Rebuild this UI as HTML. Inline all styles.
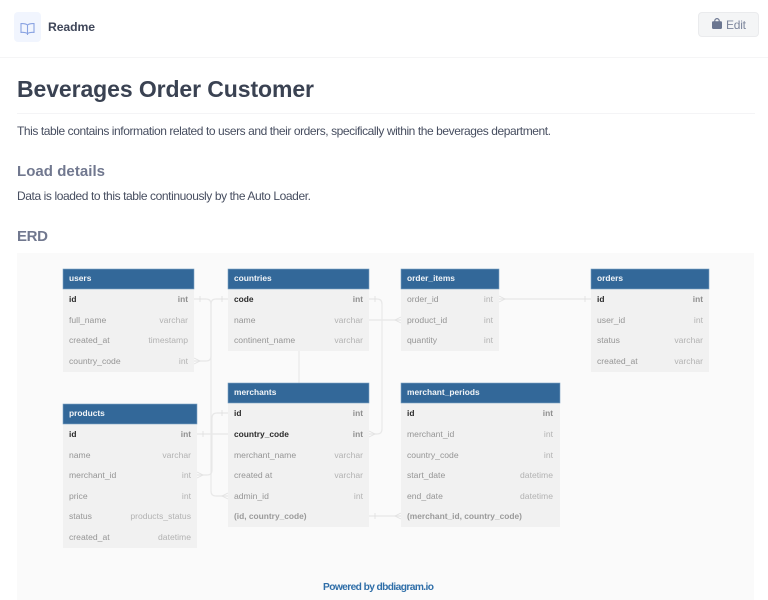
<!DOCTYPE html>
<html><head><meta charset="utf-8"><style>
html,body{margin:0;padding:0;width:768px;height:600px;overflow:hidden;background:#fff}
svg{display:block;font-family:"Liberation Sans",sans-serif;filter:blur(.3px)}
.n{font-size:8.6px;fill:#959595}
.t{font-size:8.6px;fill:#b2b2b2;text-anchor:end}
.k{font-size:8.4px;fill:#2b2b2b;font-weight:700}
.kt{font-size:8.4px;fill:#8f8f8f;font-weight:700;text-anchor:end}
.h{font-size:8.4px;fill:#f2f5f8;font-weight:700}
.i{font-size:8.4px;fill:#9a9a9a;font-weight:700}
.b{fill:#f1f1f1}.hd{fill:#336899;stroke:#7fa3c4;stroke-width:.6}
.l{fill:none;stroke:#e8e8e8;stroke-width:1.2}
.m{fill:none;stroke:#e2e2e2;stroke-width:.9}
</style></head><body>
<svg width="768" height="600" viewBox="0 0 768 600" xmlns="http://www.w3.org/2000/svg">
<rect x="14" y="12" width="27" height="30" rx="4" fill="#f1f5fe"/>
<path d="M27.5 25C26 23.8 24 23.4 21 23.6V32.4C24 32.2 26 32.6 27.5 33.6C29 32.6 31 32.2 34 32.4V23.6C31 23.4 29 23.8 27.5 25ZM27.5 25V35" fill="none" stroke="#8aa3e2" stroke-width="1.1"/>
<text x="48" y="31" font-size="12.2" font-weight="700" fill="#3f4659" textLength="47">Readme</text>
<rect x="698.5" y="12.5" width="60" height="24" rx="3.5" fill="#f4f5f6" stroke="#eaebed"/>
<path d="M714.8 22V20.8a2.2 2.2 0 0 1 4.4 0V22" fill="none" stroke="#6b7690" stroke-width="1.2"/>
<rect x="712" y="21.3" width="10" height="7.7" rx="1.2" fill="#6b7690"/>
<text x="726" y="29" font-size="12" fill="#7d869c" textLength="20">Edit</text>
<rect x="0" y="57" width="768" height="1" fill="#f5f5f6"/>
<text x="17" y="97" font-size="23" font-weight="700" fill="#3a4252" textLength="297">Beverages Order Customer</text>
<rect x="17" y="113" width="738" height="1" fill="#f4f4f6"/>
<text x="17" y="135" font-size="12" fill="#474e60" textLength="534">This table contains information related to users and their orders, specifically within the beverages department.</text>
<text x="17" y="176" font-size="15" font-weight="700" fill="#71788f" textLength="88">Load details</text>
<text x="17" y="200" font-size="12" fill="#474e60" textLength="294">Data is loaded to this table continuously by the Auto Loader.</text>
<text x="17" y="241" font-size="15" font-weight="700" fill="#71788f" textLength="31">ERD</text>
<rect x="17" y="253" width="737" height="347" fill="#fafafa"/>

<path class="l" d="M194 299H206Q211 299 211 304V491Q211 496 216 496H228"/>
<path class="l" d="M228 299H216Q211 299 211 304V356Q211 361 206 361H194"/>
<path class="l" d="M228 413H217Q212 413 212 418V470Q212 475 207 475H197"/>
<path class="l" d="M197 434H228"/>
<path class="l" d="M369 299H377Q382 299 382 304V429Q382 434 377 434H369"/>
<path class="l" d="M369 320H401"/>
<path class="l" d="M299 351V383"/>
<path class="l" d="M369 516H401"/>
<path class="l" d="M499 299H591"/>
<path class="m" d="M200 296V302M222 296V302M375 296V302M585 296V302M203 431V437M222 410V416M375 513V519M194 358L200 361L194 364M197 472L203 475L197 478M228 493L222 496L228 499M369 431L375 434L369 437M401 317L395 320L401 323M401 513L395 516L401 519M499 296L505 299L499 302"/>

<rect class="b" x="63" y="289" width="131" height="83"/><rect class="hd" x="63" y="269" width="131" height="20"/>
<text class="h" x="69" y="281">users</text>
<text class="k" x="69" y="302">id</text><text class="kt" x="188" y="302">int</text>
<text class="n" x="69" y="323">full_name</text><text class="t" x="188" y="323">varchar</text>
<text class="n" x="69" y="343">created_at</text><text class="t" x="188" y="343">timestamp</text>
<text class="n" x="69" y="364">country_code</text><text class="t" x="188" y="364">int</text>

<rect class="b" x="228" y="289" width="141" height="62"/><rect class="hd" x="228" y="269" width="141" height="20"/>
<text class="h" x="234" y="281">countries</text>
<text class="k" x="234" y="302">code</text><text class="kt" x="363" y="302">int</text>
<text class="n" x="234" y="323">name</text><text class="t" x="363" y="323">varchar</text>
<text class="n" x="234" y="343">continent_name</text><text class="t" x="363" y="343">varchar</text>

<rect class="b" x="401" y="289" width="98" height="62"/><rect class="hd" x="401" y="269" width="98" height="20"/>
<text class="h" x="407" y="281">order_items</text>
<text class="n" x="407" y="302">order_id</text><text class="t" x="493" y="302">int</text>
<text class="n" x="407" y="323">product_id</text><text class="t" x="493" y="323">int</text>
<text class="n" x="407" y="343">quantity</text><text class="t" x="493" y="343">int</text>

<rect class="b" x="591" y="289" width="118" height="83"/><rect class="hd" x="591" y="269" width="118" height="20"/>
<text class="h" x="597" y="281">orders</text>
<text class="k" x="597" y="302">id</text><text class="kt" x="703" y="302">int</text>
<text class="n" x="597" y="323">user_id</text><text class="t" x="703" y="323">int</text>
<text class="n" x="597" y="343">status</text><text class="t" x="703" y="343">varchar</text>
<text class="n" x="597" y="364">created_at</text><text class="t" x="703" y="364">varchar</text>

<rect class="b" x="228" y="403" width="141" height="124"/><rect class="hd" x="228" y="383" width="141" height="20"/>
<text class="h" x="234" y="395">merchants</text>
<text class="k" x="234" y="416">id</text><text class="kt" x="363" y="416">int</text>
<text class="k" x="234" y="437">country_code</text><text class="kt" x="363" y="437">int</text>
<text class="n" x="234" y="458">merchant_name</text><text class="t" x="363" y="458">varchar</text>
<text class="n" x="234" y="478">created at</text><text class="t" x="363" y="478">varchar</text>
<text class="n" x="234" y="499">admin_id</text><text class="t" x="363" y="499">int</text>
<text class="i" x="234" y="519">(id, country_code)</text>

<rect class="b" x="401" y="403" width="159" height="124"/><rect class="hd" x="401" y="383" width="159" height="20"/>
<text class="h" x="407" y="395">merchant_periods</text>
<text class="k" x="407" y="416">id</text><text class="kt" x="553" y="416">int</text>
<text class="n" x="407" y="437">merchant_id</text><text class="t" x="553" y="437">int</text>
<text class="n" x="407" y="458">country_code</text><text class="t" x="553" y="458">int</text>
<text class="n" x="407" y="478">start_date</text><text class="t" x="553" y="478">datetime</text>
<text class="n" x="407" y="499">end_date</text><text class="t" x="553" y="499">datetime</text>
<text class="i" x="407" y="519">(merchant_id, country_code)</text>

<rect class="b" x="63" y="424" width="134" height="124"/><rect class="hd" x="63" y="404" width="134" height="20"/>
<text class="h" x="69" y="416">products</text>
<text class="k" x="69" y="437">id</text><text class="kt" x="191" y="437">int</text>
<text class="n" x="69" y="458">name</text><text class="t" x="191" y="458">varchar</text>
<text class="n" x="69" y="478">merchant_id</text><text class="t" x="191" y="478">int</text>
<text class="n" x="69" y="499">price</text><text class="t" x="191" y="499">int</text>
<text class="n" x="69" y="519">status</text><text class="t" x="191" y="519">products_status</text>
<text class="n" x="69" y="540">created_at</text><text class="t" x="191" y="540">datetime</text>

<text x="323" y="590" font-size="10.2" font-weight="700" fill="#2f6ea8" textLength="111">Powered by dbdiagram.io</text>
</svg>
</body></html>
